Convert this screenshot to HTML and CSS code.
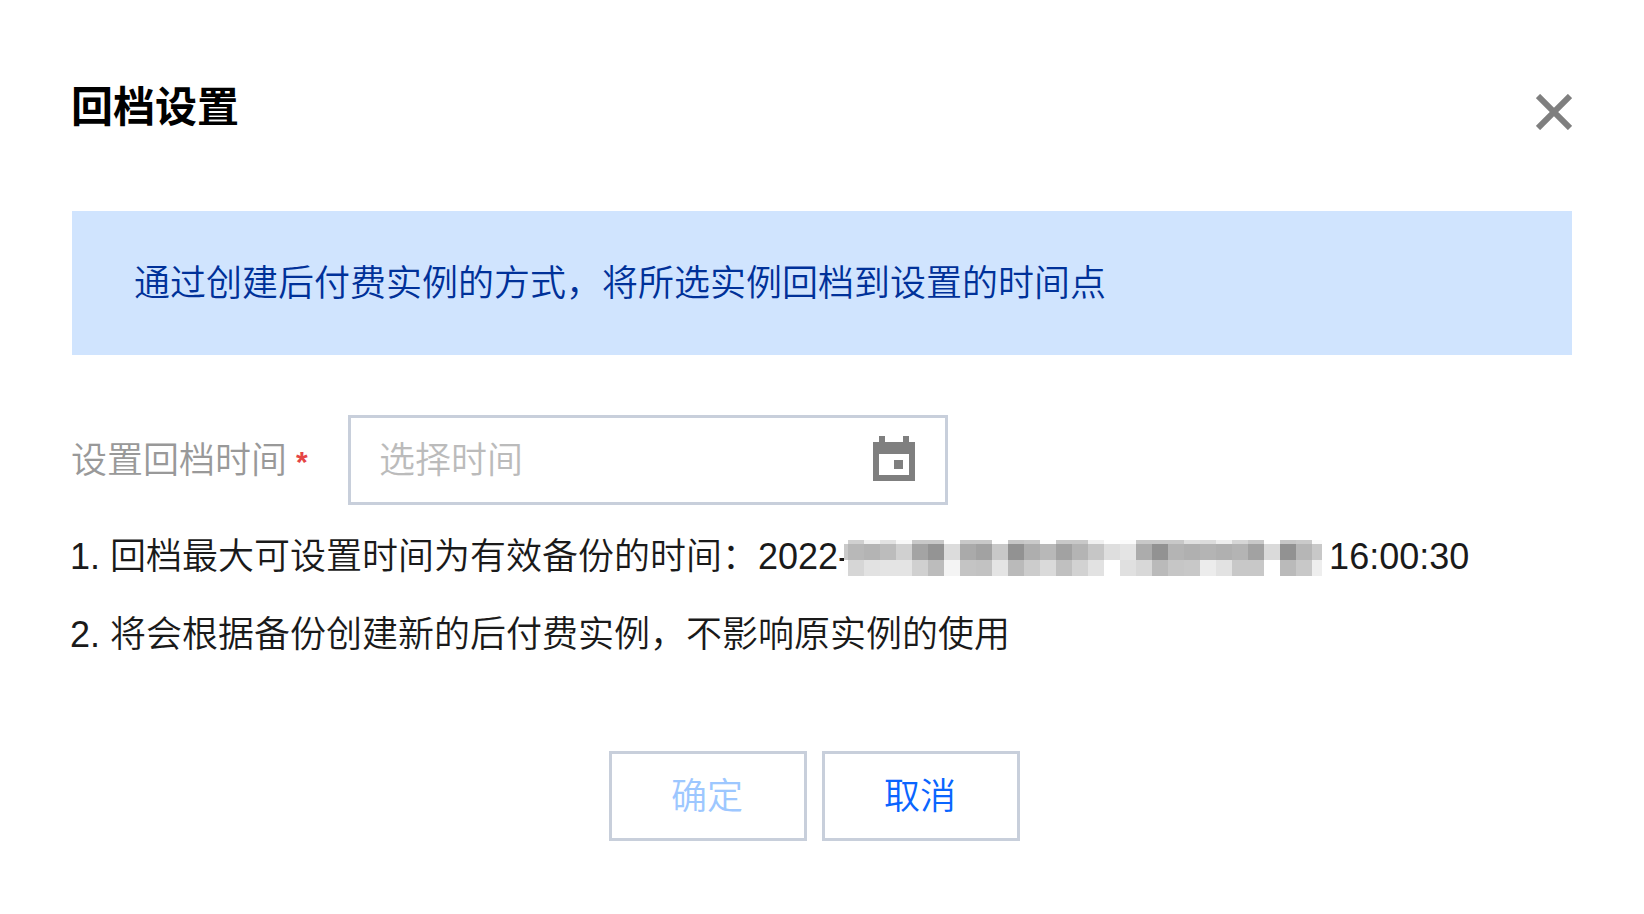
FILE: index.html
```html
<!DOCTYPE html>
<html lang="zh-CN">
<head>
<meta charset="utf-8">
<title>回档设置</title>
<link rel="stylesheet" href="styles.css">
</head>
<body>
<main class="dialog" role="dialog" aria-labelledby="dialog-title">
  <header class="dialog-head">
    <h1 class="dialog-title" id="dialog-title">回档设置</h1>
    <button class="icon-button close" type="button" aria-label="关闭">
      <svg width="36" height="36" viewBox="0 0 36 36"><path d="M2 2L34 34M34 2L2 34" stroke="#7f7f7f" stroke-width="6" fill="none"/></svg>
    </button>
  </header>
  <p class="notice">通过创建后付费实例的方式，将所选实例回档到设置的时间点</p>
  <form class="form">
    <div class="field">
      <label class="field-label" for="time">设置回档时间<span class="required">*</span></label>
      <div class="picker">
        <input class="picker-input" id="time" type="text" placeholder="选择时间">
        <button class="icon-button" type="button" aria-label="打开日历">
          <svg width="42" height="48" viewBox="0 0 42 48"><path fill="#7f7f7f" fill-rule="evenodd" d="M6 0h6v6h18V0h6v6h6v39H0V6h6zM6 18v21h30V18zM21 24h9v9h-9z"/></svg>
        </button>
      </div>
    </div>
    <ol class="notes">
      <li>1. 回档最大可设置时间为有效备份的时间：2022-<svg class="mask" width="478" height="36" viewBox="844 540 478 36" shape-rendering="crispEdges" aria-hidden="true"></svg>16:00:30</li>
      <li>2. 将会根据备份创建新的后付费实例，不影响原实例的使用</li>
    </ol>
    <div class="actions">
      <button class="button" type="submit" disabled>确定</button>
      <button class="button" type="button">取消</button>
    </div>
  </form>
</main>
<script src="mask.js"></script>
</body>
</html>
```
FILE: styles.css
```css
* {
  box-sizing: border-box;
}

body {
  margin: 0;
  background: #fff;
  color: #1a1a1a;
  font-family: "Liberation Sans", "Noto Sans CJK SC", sans-serif;
  font-size: 36px;
  font-weight: 350;
  line-height: 54px;
}

.dialog {
  padding: 76px 72px 72px;
}

.dialog-head {
  display: flex;
  align-items: center;
  justify-content: space-between;
  height: 72px;
  margin-bottom: 63px;
}

.dialog-title {
  margin: 0 0 0 -1px;
  padding-bottom: 8px;
  color: #000;
  font-size: 42px;
  font-weight: 700;
  line-height: 60px;
}

.icon-button {
  display: flex;
  padding: 0;
  border: 0;
  background: none;
  cursor: pointer;
}

.notice {
  margin: 0 0 60px;
  padding: 46px 62px 44px;
  background: #d0e4fe;
  color: #003199;
}

.field {
  display: flex;
  align-items: center;
  margin-left: -1px;
}

.field-label {
  width: 277px;
  padding-top: 2px;
  color: #999;
}

.required {
  margin-left: 9px;
  color: #e54545;
  font-size: 30px;
  font-weight: 700;
  line-height: 30px;
  vertical-align: 1px;
}

.picker {
  display: flex;
  align-items: center;
  width: 600px;
  height: 90px;
  padding: 0 30px 0 28px;
  border: 3px solid #c8cfdb;
}

.picker-input {
  flex: 1;
  min-width: 0;
  height: 56px;
  padding: 2px 0 0;
  border: 0;
  outline: 0;
  background: none;
  color: inherit;
  font: inherit;
}

.picker-input::placeholder {
  color: #bbb;
  opacity: 1;
}

.notes {
  margin: 13px 0 77px -2px;
  padding: 0;
  list-style: none;
  line-height: 78px;
}

.mask {
  margin: 0 7px 0 -6px;
  vertical-align: -7px;
}

.actions {
  display: flex;
  justify-content: center;
  gap: 15px;
  padding-right: 15px;
}

.button {
  width: 198px;
  height: 90px;
  padding: 2px 2px 0 0;
  border: 3px solid #c8cfdb;
  background: #fff;
  color: #0a65ff;
  font: inherit;
  cursor: pointer;
}

.button:disabled {
  color: #9dc7ff;
  cursor: default;
}
```
FILE: mask.js
```js
// Grey mosaic hiding part of the date: three rows of cells, grey level per cell.
const rows = [
  { y: 540, h: 4, v: "ff d0 f2 e2 f8 c8 c8 ff c8 c8 ff c6 ca fd c8 c8 f0 fe fb c8 c8 c8 e0 dc ee d6 c8 ff c6 ca fb" },
  { y: 544, h: 16, v: "c9 b8 b4 bc d0 a4 94 dc aa a2 c8 92 ae b8 a2 b4 c6 de e4 ac 92 b4 b0 b4 b0 b4 a2 da 92 b6 c8" },
  { y: 560, h: 16, v: "fe d6 e2 e4 e4 d0 bc f4 c4 c2 e4 ba cc da c0 d2 e2 ff e0 d8 ba c6 c8 ec e2 c8 c8 ff ba c8 ee" }
];
const mask = document.querySelector(".mask");
for (const row of rows) {
  row.v.split(" ").forEach((grey, i) => {
    const cell = document.createElementNS("http://www.w3.org/2000/svg", "rect");
    cell.setAttribute("x", 832 + i * 16);
    cell.setAttribute("y", row.y);
    cell.setAttribute("width", 16);
    cell.setAttribute("height", row.h);
    cell.setAttribute("fill", "#" + grey.repeat(3));
    mask.append(cell);
  });
}
```
